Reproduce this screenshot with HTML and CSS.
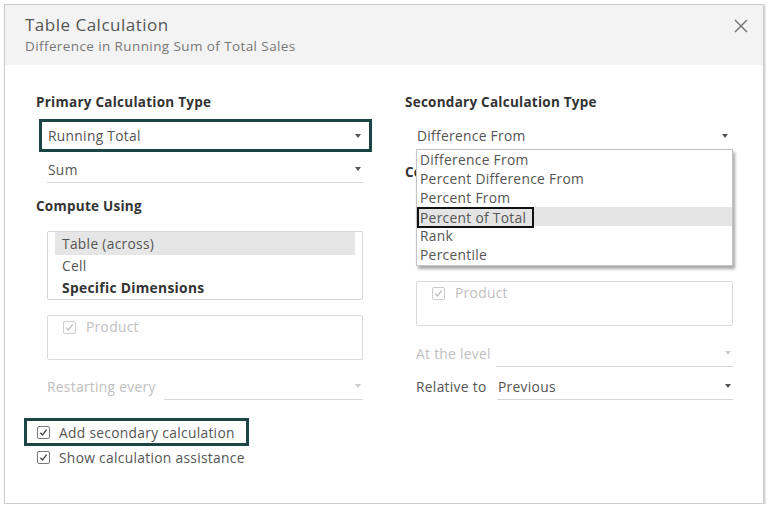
FILE: index.html
```html
<!DOCTYPE html>
<html lang="en">
<head>
    <meta charset="UTF-8">
    <title>Table Calculation</title>
    <link rel="stylesheet" href="styles.css">
</head>
<body>
    <div class="dialog">
        <header class="dialog-header">
            <div>
                <h1 class="dialog-title">Table Calculation</h1>
                <p class="dialog-subtitle">Difference in Running Sum of Total Sales</p>
            </div>
            <button class="close-btn" aria-label="Close">
                <svg width="14" height="14" viewBox="0 0 14 14"><path d="M1 1 L13 13 M13 1 L1 13" stroke="currentColor" stroke-width="1.5" fill="none"/></svg>
            </button>
        </header>

        <div class="dialog-body">
            <div class="columns">
                <!-- Основной расчёт -->
                <section class="col col-primary">
                    <h2 class="section-label">Primary Calculation Type</h2>
                    <div class="select-wrap marked">
                        <span>Running Total</span><span class="caret"></span>
                    </div>
                    <div class="select">
                        <span>Sum</span><span class="caret"></span>
                    </div>

                    <h2 class="section-label compute-label">Compute Using</h2>
                    <ul class="listbox">
                        <li class="selected">Table (across)</li>
                        <li>Cell</li>
                        <li class="strong">Specific Dimensions</li>
                    </ul>

                    <div class="dim-box">
                        <label class="check disabled">
                            <span class="checkbox"><svg viewBox="0 0 11 11"><path d="M2.4 5.7 L4.5 7.9 L8.6 2.7" fill="none" stroke="currentColor" stroke-width="1.3"/></svg></span>
                            Product
                        </label>
                    </div>

                    <div class="field-row disabled">
                        <span class="field-label">Restarting every</span>
                        <div class="select"><span></span><span class="caret"></span></div>
                    </div>
                </section>

                <!-- Вторичный расчёт -->
                <section class="col col-secondary">
                    <h2 class="section-label">Secondary Calculation Type</h2>
                    <div class="select-wrap">
                        <span>Difference From</span><span class="caret"></span>
                    </div>

                    <h2 class="section-label compute-label">Compute Using</h2>
                    <!-- список закрыт выпадающим меню -->
                    <ul class="listbox"></ul>

                    <div class="dim-box">
                        <label class="check disabled">
                            <span class="checkbox"><svg viewBox="0 0 11 11"><path d="M2.4 5.7 L4.5 7.9 L8.6 2.7" fill="none" stroke="currentColor" stroke-width="1.3"/></svg></span>
                            Product
                        </label>
                    </div>

                    <div class="field-row disabled">
                        <span class="field-label">At the level</span>
                        <div class="select"><span></span><span class="caret"></span></div>
                    </div>
                    <div class="field-row relative-row">
                        <span class="field-label">Relative to</span>
                        <div class="select"><span>Previous</span><span class="caret"></span></div>
                    </div>

                    <ul class="dropdown-menu">
                        <li>Difference From</li>
                        <li>Percent Difference From</li>
                        <li>Percent From</li>
                        <li class="hover"><span class="marked-item">Percent of Total</span></li>
                        <li>Rank</li>
                        <li>Percentile</li>
                    </ul>
                </section>
            </div>

            <div class="options">
                <label class="option marked">
                    <span class="checkbox"><svg viewBox="0 0 11 11"><path d="M2.4 5.7 L4.5 7.9 L8.6 2.7" fill="none" stroke="currentColor" stroke-width="1.3"/></svg></span>
                    Add secondary calculation
                </label>
                <label class="option second">
                    <span class="checkbox"><svg viewBox="0 0 11 11"><path d="M2.4 5.7 L4.5 7.9 L8.6 2.7" fill="none" stroke="currentColor" stroke-width="1.3"/></svg></span>
                    Show calculation assistance
                </label>
            </div>
        </div>
    </div>
</body>
</html>
```

FILE: styles.css
```css
* {
    margin: 0;
    padding: 0;
    box-sizing: border-box;
}

body {
    font-family: 'Open Sans', Lato, sans-serif;
    font-size: 13.8px;
    letter-spacing: 0.3px;
    color: #555555;
    background: #ffffff;
}

.dialog {
    margin: 4px 0 0 4px;
    width: 760px;
    height: 500px;
    border: 1px solid #cdcdcd;
    box-shadow: 1px 1px 2px rgba(0, 0, 0, 0.25);
    display: flex;
    flex-direction: column;
}

.dialog-header {
    height: 60px;
    background: #f3f3f3;
    display: flex;
    justify-content: space-between;
    align-items: flex-start;
    padding: 9px 15px 0 20px;
}

.dialog-title {
    font-size: 17px;
    font-weight: 400;
    line-height: 22px;
    letter-spacing: 0.5px;
    color: #555555;
}

.dialog-subtitle {
    margin-top: 2px;
    font-size: 13.5px;
    line-height: 16px;
    letter-spacing: 0.4px;
    color: #787878;
}

.close-btn {
    margin-top: 5px;
    background: none;
    border: none;
    color: #777777;
    display: flex;
}

.dialog-body {
    flex: 1;
    padding: 28px 30px 0 31px;
}

.columns {
    display: grid;
    grid-template-columns: 327px 328px;
    column-gap: 42px;
}

.col {
    position: relative;
}

.section-label {
    font-size: 13.5px;
    font-weight: 700;
    line-height: 18px;
    letter-spacing: 0.25px;
    color: #333333;
}

.caret {
    width: 0;
    height: 0;
    border-left: 3.5px solid transparent;
    border-right: 3.5px solid transparent;
    border-top: 4px solid #555555;
}

.select-wrap {
    margin: 8px -9px 0 3px;
    height: 33px;
    border: 3px solid transparent;
    padding: 0 8px 0 6px;
    display: flex;
    align-items: center;
    justify-content: space-between;
}

.select-wrap.marked {
    border-color: #1d4444;
}

.col-secondary .select-wrap {
    margin-right: 0;
    padding-right: 2px;
}

.select {
    height: 27px;
    margin: 4px 0 0 11px;
    padding: 0 2px 0 1px;
    border-bottom: 1px solid #d6d6d6;
    display: flex;
    align-items: center;
    justify-content: space-between;
}

.compute-label {
    margin-top: 14px;
}

.col-secondary .compute-label {
    margin-top: 11px;
}

.listbox {
    list-style: none;
    margin: 16px 0 0 11px;
    height: 69px;
    border: 1px solid #d6d6d6;
    border-radius: 2px;
    padding: 0 7px;
}

.listbox li {
    height: 22px;
    line-height: 22px;
    padding-left: 7px;
}

.listbox li:first-child {
    height: 23px;
    line-height: 23px;
}

.listbox li.selected {
    background: #e6e6e6;
}

.listbox li.strong {
    font-weight: 700;
    color: #333333;
}

.dim-box {
    margin: 15px 0 0 11px;
    height: 45px;
    border: 1px solid #dadada;
    border-radius: 2px;
    padding: 3px 15px;
}

.check,
.option {
    display: flex;
    align-items: center;
    gap: 9px;
}

.checkbox {
    width: 13px;
    height: 13px;
    border: 1px solid #7a7a7a;
    border-radius: 2px;
    color: #444444;
    display: flex;
}

.checkbox svg {
    width: 11px;
    height: 11px;
}

.check {
    gap: 10px;
    line-height: 16px;
}

.disabled {
    color: #c0c0c0;
}

.disabled .checkbox {
    border-color: #cccccc;
    color: #bdbdbd;
}

.disabled .caret {
    border-top-color: #cccccc;
}

.field-row {
    margin: 13px 0 0 11px;
    display: flex;
    align-items: center;
}

.field-row .select {
    flex: 1;
    margin: 0;
}

.col-primary .field-label {
    width: 117px;
}

.col-secondary .field-label {
    width: 81px;
}

.col-secondary .field-row {
    margin-top: 14px;
}

.col-secondary .relative-row {
    margin-top: 6px;
}

.dropdown-menu {
    position: absolute;
    top: 56px;
    left: 11px;
    width: 317px;
    height: 117px;
    list-style: none;
    background: #ffffff;
    border: 1px solid #c4c4c4;
    box-shadow: 2px 3px 3px rgba(0, 0, 0, 0.35);
}

.dropdown-menu li {
    height: 19px;
    line-height: 19px;
    padding-left: 3px;
    white-space: nowrap;
}

.dropdown-menu li.hover {
    background: #e4e4e4;
}

.marked-item {
    display: inline-block;
    margin-left: -3px;
    padding: 0 6px 0 1px;
    height: 21px;
    line-height: 17px;
    border: 2px solid #111111;
    vertical-align: top;
}

.options {
    margin: 18px 0 0 -12px;
}

.option {
    width: fit-content;
    height: 28px;
    border: 3px solid transparent;
    padding: 0 11px 0 10px;
}

.option.marked {
    border-color: #1d4444;
}

.option.second {
    margin-top: -3px;
}
```
